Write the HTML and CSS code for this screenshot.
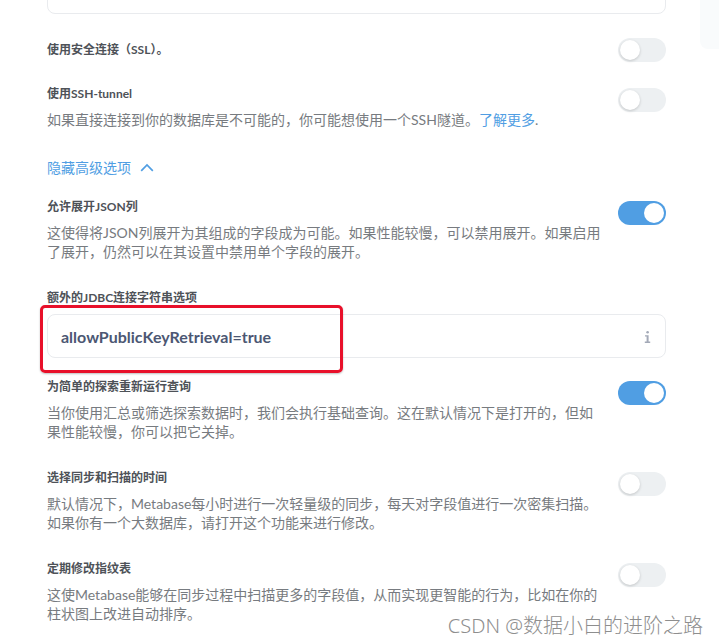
FILE: index.html
```html
<!DOCTYPE html>
<html lang="zh-CN">
<head>
<meta charset="utf-8">
<title>数据库设置</title>
<link rel="stylesheet" href="styles.css">
</head>
<body>
<div class="page">
  <main class="form">
    <div class="field-input top-input"></div>

    <div class="row row-center">
      <div class="text"><div class="label">使用安全连接（SSL）。</div></div>
      <span class="toggle"></span>
    </div>

    <div class="row gap-24">
      <div class="text">
        <div class="label">使用SSH-tunnel</div>
        <div class="desc">如果直接连接到你的数据库是不可能的，你可能想使用一个SSH隧道。<a class="link">了解更多</a>.</div>
      </div>
      <span class="toggle"></span>
    </div>

    <a class="advanced">隐藏高级选项
      <svg class="chev" width="14" height="9" viewBox="0 0 14 9"><path d="M1.2 7.8 L7 2 L12.8 7.8" fill="none" stroke="#509ee3" stroke-width="1.7"/></svg>
    </a>

    <div class="row gap-21">
      <div class="text">
        <div class="label">允许展开JSON列</div>
        <div class="desc">这使得将JSON列展开为其组成的字段成为可能。如果性能较慢，可以禁用展开。如果启用了展开，仍然可以在其设置中禁用单个字段的展开。</div>
      </div>
      <span class="toggle on"></span>
    </div>

    <div class="jdbc">
      <div class="label">额外的JDBC连接字符串选项</div>
      <div class="field-input jdbc-input">
        <span class="value">allowPublicKeyRetrieval=true</span>
        <svg class="info" width="7" height="12" viewBox="0 0 7 12"><circle cx="3.6" cy="1.3" r="1.3" fill="#a3a9b7"/><path d="M1 4.2 H4.6 V10.6 H6.2 V12 H0.8 V10.6 H2.6 V5.5 H1 Z" fill="#a3a9b7"/></svg>
      </div>
      <div class="highlight"></div>
    </div>

    <div class="row gap-21">
      <div class="text">
        <div class="label">为简单的探索重新运行查询</div>
        <div class="desc">当你使用汇总或筛选探索数据时，我们会执行基础查询。这在默认情况下是打开的，但如果性能较慢，你可以把它关掉。</div>
      </div>
      <span class="toggle on"></span>
    </div>

    <div class="row gap-29">
      <div class="text">
        <div class="label">选择同步和扫描的时间</div>
        <div class="desc">默认情况下，Metabase每小时进行一次轻量级的同步，每天对字段值进行一次密集扫描。如果你有一个大数据库，请打开这个功能来进行修改。</div>
      </div>
      <span class="toggle"></span>
    </div>

    <div class="row gap-29">
      <div class="text">
        <div class="label">定期修改指纹表</div>
        <div class="desc">这使Metabase能够在同步过程中扫描更多的字段值，从而实现更智能的行为，比如在你的柱状图上改进自动排序。</div>
      </div>
      <span class="toggle"></span>
    </div>
  </main>
  <aside class="side"></aside>
</div>
<div class="watermark">CSDN @数据小白的进阶之路</div>
</body>
</html>
```

FILE: styles.css
```css
* { box-sizing: border-box; }
html, body {
  margin: 0;
  padding: 0;
  background: #ffffff;
  font-family: Lato, "Noto Sans CJK SC", sans-serif;
  overflow: hidden;
}
.page {
  display: flex;
  align-items: flex-start;
  gap: 34px;
  height: 643px;
  position: relative;
}
.form {
  margin-left: 47px;
  width: 619px;
  flex: none;
}
.side {
  flex: 1;
  height: 49px;
  background: #f9fbfc;
  border-bottom-left-radius: 8px;
}
.field-input {
  border: 1px solid #e9ebee;
  border-radius: 8px;
  height: 44px;
  background: #fff;
}
.top-input {
  margin-top: -30px;
}
.row {
  display: flex;
  align-items: flex-start;
  justify-content: space-between;
}
.row-center {
  align-items: center;
  margin-top: 24px;
}
.gap-24 { margin-top: 24px; }
.gap-21 { margin-top: 21px; }
.gap-29 { margin-top: 29px; }
.text {
  width: 558px;
}
.label {
  font-size: 12px;
  line-height: 16px;
  font-weight: 700;
  color: #4e5258;
}
.desc {
  margin-top: 8px;
  font-size: 14px;
  line-height: 19px;
  color: #777b80;
}
.link {
  color: #509ee3;
}
.toggle {
  flex: none;
  position: relative;
  width: 48px;
  height: 24px;
  border-radius: 12px;
  background: #edf0f2;
  margin-top: 2px;
}
.row-center .toggle { margin-top: 0; }
.toggle::after {
  content: "";
  position: absolute;
  top: 2px;
  left: 2px;
  width: 20px;
  height: 20px;
  border-radius: 50%;
  background: #fff;
  box-shadow: 0 1px 3px rgba(0, 0, 0, 0.18);
}
.toggle.on {
  background: #509ee3;
}
.toggle.on::after {
  left: 26px;
  box-shadow: 0 0 0 1px rgba(80, 158, 227, 0.6);
}
.advanced {
  display: flex;
  align-items: center;
  gap: 9px;
  margin-top: 29px;
  font-size: 14px;
  line-height: 20px;
  color: #509ee3;
}
.chev { margin-top: -2px; }
.jdbc {
  position: relative;
  margin-top: 29px;
}
.jdbc-input {
  margin-top: 8px;
  display: flex;
  align-items: center;
  justify-content: space-between;
  padding: 0 14px 0 13px;
}
.value {
  font-size: 16px;
  font-weight: 700;
  color: #4c5773;
}
.info { margin-top: 1px; }
.highlight {
  position: absolute;
  left: -7px;
  top: 15px;
  width: 303px;
  height: 68px;
  border: 3px solid #e8102a;
  border-radius: 5px;
  box-shadow: 0 1px 2px rgba(0, 0, 0, 0.25);
}
.watermark {
  position: absolute;
  right: 16px;
  top: 613px;
  font-family: "Noto Sans", "Noto Sans CJK SC", sans-serif;
  font-size: 20px;
  line-height: 26px;
  color: #8e8e8e;
  font-weight: 300;
  text-shadow: 0 0 1px #fff;
}
```
